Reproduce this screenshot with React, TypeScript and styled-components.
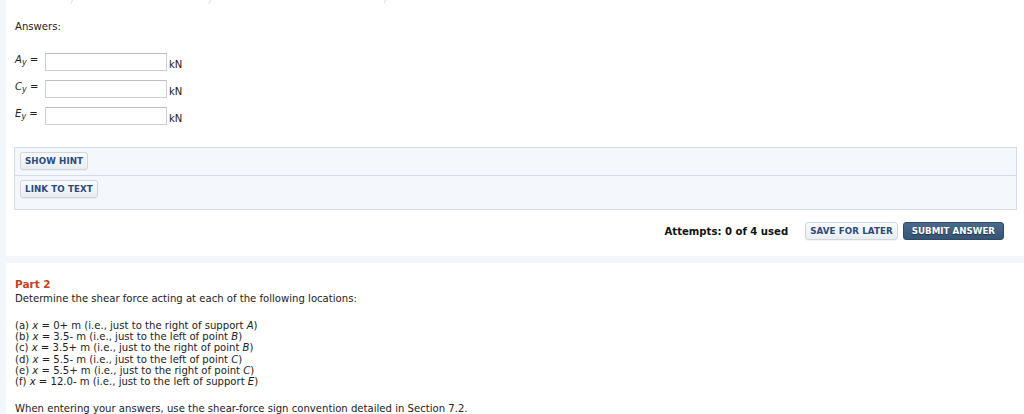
import React from "react";
import styled, { createGlobalStyle } from "styled-components";

const Global = createGlobalStyle`
  html, body { margin: 0; padding: 0; background: #f3f6fa; }
  body { font-family: "DejaVu Sans", Verdana, sans-serif; font-size: 10.1px; color: #222; }
`;

const Page = styled.div`
  padding-left: 6px;
  display: flex;
  flex-direction: column;
  gap: 7px;
`;

const Card = styled.section<{ $pb?: number }>`
  background: #fff;
  padding: 0 7px ${(p) => p.$pb ?? 16}px 9px;
  display: flex;
  flex-direction: column;
`;

const TopMarks = styled.div`
  height: 4px;
  overflow: hidden;
  position: relative;
`;

const Mark = styled.span<{ $x: number }>`
  position: absolute;
  left: ${(p) => p.$x}px;
  top: -1px;
  font-style: italic;
  font-size: 5px;
  line-height: 5px;
  color: #b0b0b0;
`;

const Heading = styled.div`
  margin-top: 17px;
  line-height: 12px;
`;

const Rows = styled.div`
  margin-top: 20px;
  display: flex;
  flex-direction: column;
  gap: 9px;
`;

const Row = styled.div`
  display: flex;
  align-items: flex-start;
`;

const Label = styled.div`
  width: 30px;
  padding-top: 1px;
  line-height: 12px;
  white-space: nowrap;
`;

const Var = styled.i`
  font-family: "DejaVu Sans", Verdana, sans-serif;
`;

const Sub = styled.sub`
  font-style: italic;
  font-size: 8px;
  vertical-align: -2px;
  line-height: 0;
`;

const Field = styled.input`
  box-sizing: border-box;
  width: 122px;
  height: 18px;
  border: 1px solid #cfcfcf;
  border-top-color: #bdbdbd;
  margin: 0;
  padding: 0 3px;
  background: #fff;
`;

const Unit = styled.span`
  margin-left: 2px;
  padding-top: 6px;
  line-height: 12px;
  color: #222;
`;

const HintPanel = styled.div`
  margin: 22px 0 0 -1px;
  border: 1px solid #d4dbe7;
  background: #f4f7fb;
  display: flex;
  flex-direction: column;
`;

const HintSection = styled.div<{ $pb: number; $divider?: boolean }>`
  padding: 4px 5px ${(p) => p.$pb}px;
  border-top: ${(p) => (p.$divider ? "1px solid #d4dbe7" : "none")};
  display: flex;
`;

const LightButton = styled.button`
  font-family: "DejaVu Sans", Verdana, sans-serif;
  font-weight: bold;
  font-size: 8.7px;
  letter-spacing: 0.1px;
  color: #2c4a78;
  background: linear-gradient(#fbfcfd, #e9edf2);
  border: 1px solid #d0d6df;
  border-radius: 3px;
  height: 18px;
  padding: 0 4px;
  line-height: 16px;
  box-shadow: 0 1px 0 rgba(0,0,0,0.04);
`;

const DarkButton = styled.button`
  font-family: "DejaVu Sans", Verdana, sans-serif;
  font-weight: bold;
  font-size: 8.7px;
  color: #fff;
  text-shadow: 0 1px 1px rgba(0,0,0,0.5);
  background: linear-gradient(#4a6a8c, #365474);
  border: 1px solid #2f4a68;
  border-radius: 3px;
  height: 18px;
  padding: 0 8px;
  line-height: 16px;
`;

const ActionBar = styled.div`
  margin-top: 12px;
  display: flex;
  justify-content: flex-end;
  align-items: center;
  padding-right: 13px;
`;

const Attempts = styled.span`
  font-weight: bold;
  margin-right: 17px;
  color: #111;
`;

const SubmitWrap = styled.span`
  margin-left: 5px;
  display: flex;
`;

const PartTitle = styled.div`
  margin-top: 15px;
  font-weight: bold;
  color: #c8401d;
  font-size: 10.5px;
  line-height: 12px;
`;

const Para = styled.p<{ $mt: number }>`
  margin: ${(p) => p.$mt}px 0 0;
  line-height: 12px;
`;

const List = styled.div`
  margin-top: 15px;
  display: flex;
  flex-direction: column;
  line-height: 11.2px;
`;

const items: [string, string, string, string][] = [
  ["(a) ", "0+ m (i.e., just to the right of support ", "A", ")"],
  ["(b) ", "3.5- m (i.e., just to the left of point ", "B", ")"],
  ["(c) ", "3.5+ m (i.e., just to the right of point ", "B", ")"],
  ["(d) ", "5.5- m (i.e., just to the left of point ", "C", ")"],
  ["(e) ", "5.5+ m (i.e., just to the right of point ", "C", ")"],
  ["(f) ", "12.0- m (i.e., just to the left of support ", "E", ")"],
];

const vars = ["A", "C", "E"];

export default function App() {
  return (
    <>
      <Global />
      <Page>
        <Card $pb={16}>
          <TopMarks>
            <Mark $x={56}>/</Mark>
            <Mark $x={194}>/</Mark>
            <Mark $x={369}>/</Mark>
          </TopMarks>
          <Heading>Answers:</Heading>
          <Rows>
            {vars.map((v) => (
              <Row key={v}>
                <Label>
                  <Var>{v}</Var>
                  <Sub>y</Sub> =
                </Label>
                <Field aria-label={`${v}y`} />
                <Unit>kN</Unit>
              </Row>
            ))}
          </Rows>
          <HintPanel>
            <HintSection $pb={5}>
              <LightButton>SHOW HINT</LightButton>
            </HintSection>
            <HintSection $pb={11} $divider>
              <LightButton>LINK TO TEXT</LightButton>
            </HintSection>
          </HintPanel>
          <ActionBar>
            <Attempts>Attempts: 0 of 4 used</Attempts>
            <LightButton>SAVE FOR LATER</LightButton>
            <SubmitWrap>
              <DarkButton>SUBMIT ANSWER</DarkButton>
            </SubmitWrap>
          </ActionBar>
        </Card>
        <Card $pb={10}>
          <PartTitle>Part 2</PartTitle>
          <Para $mt={3}>Determine the shear force acting at each of the following locations:</Para>
          <List>
            {items.map((it) => (
              <div key={it[0]}>
                {it[0]}
                <i>x</i> = {it[1]}
                <i>{it[2]}</i>
                {it[3]}
              </div>
            ))}
          </List>
          <Para $mt={16}>
            When entering your answers, use the shear-force sign convention detailed in Section 7.2.
          </Para>
        </Card>
      </Page>
    </>
  );
}
